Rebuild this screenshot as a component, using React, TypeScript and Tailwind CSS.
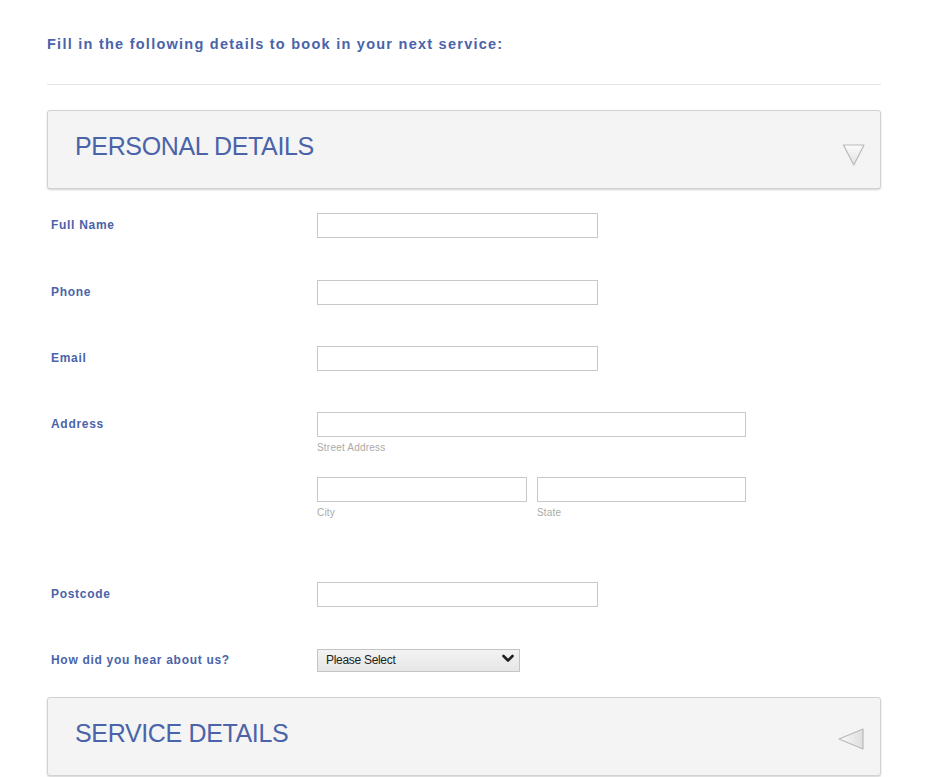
import React from 'react';

function Panel({ title, dir }: { title: string; dir: 'down' | 'left' }) {
  return (
    <div className="h-[79px] border border-[#d2d2d2] rounded-[3px] bg-[#f4f4f4] shadow-[0_1px_2px_rgba(0,0,0,0.18)] flex items-center justify-between pl-[27px] pr-[15px]">
      <h2 className="text-[25px] leading-none text-[#4a63a9] tracking-[-0.35px] -mt-[6px]">{title}</h2>
      {dir === 'down' ? (
        <svg width="24" height="24" viewBox="0 0 24 24" className="mt-[10px]">
          <defs>
            <linearGradient id="tg" x1="0" y1="0" x2="0" y2="1">
              <stop offset="0" stopColor="#fbfbfb" />
              <stop offset="1" stopColor="#e2e2e2" />
            </linearGradient>
          </defs>
          <polygon points="2.5,2 23,2 12.8,22" fill="url(#tg)" stroke="#b9b9b9" strokeWidth="1.2" strokeLinejoin="round" />
        </svg>
      ) : (
        <svg width="28" height="24" viewBox="0 0 28 24" className="mt-[4px]">
          <defs>
            <linearGradient id="tl" x1="0" y1="0" x2="1" y2="0">
              <stop offset="0" stopColor="#fbfbfb" />
              <stop offset="1" stopColor="#dedede" />
            </linearGradient>
          </defs>
          <polygon points="26,2 26,22 2,12" fill="url(#tl)" stroke="#b9b9b9" strokeWidth="1.2" strokeLinejoin="round" />
        </svg>
      )}
    </div>
  );
}

function Input({ w }: { w: string }) {
  return <input type="text" className={`${w} h-[25px] border border-[#c8c8c8] bg-white outline-none`} />;
}

function Row({ label, children, mb }: { label: string; children: React.ReactNode; mb: string }) {
  return (
    <div className={`flex items-start ${mb}`}>
      <label className="w-[266px] ml-[4px] pt-[5px] text-[12px] leading-[14px] font-bold tracking-[0.7px] text-[#4a63a9]">
        {label}
      </label>
      {children}
    </div>
  );
}

export default function App() {
  return (
    <div className="min-h-screen bg-white font-['Liberation_Sans',Arial,sans-serif]">
      <div className="w-[834px] ml-[47px] pt-[36px]">
        <p className="text-[14.5px] leading-[16px] font-bold tracking-[1.25px] text-[#4a63a9]">
          Fill in the following details to book in your next service:
        </p>
        <div className="mt-[32px] h-px bg-[#e3e3e3]" />
        <div className="mt-[25px]">
          <Panel title="PERSONAL DETAILS" dir="down" />
        </div>

        <div className="mt-[24px]">
          <Row label="Full Name" mb="mb-[42px]">
            <Input w="w-[281px]" />
          </Row>
          <Row label="Phone" mb="mb-[41px]">
            <Input w="w-[281px]" />
          </Row>
          <Row label="Email" mb="mb-[41px]">
            <Input w="w-[281px]" />
          </Row>
          <Row label="Address" mb="mb-[64px]">
            <div className="flex flex-col">
              <Input w="w-[429px]" />
              <span className="mt-[5px] text-[10px] leading-[11px] tracking-[0.2px] text-[#aaaaaa]">Street Address</span>
              <div className="mt-[24px] flex gap-[10px]">
                <div className="flex flex-col">
                  <Input w="w-[210px]" />
                  <span className="mt-[5px] text-[10px] leading-[11px] tracking-[0.2px] text-[#aaaaaa]">City</span>
                </div>
                <div className="flex flex-col">
                  <Input w="w-[209px]" />
                  <span className="mt-[5px] text-[10px] leading-[11px] tracking-[0.2px] text-[#aaaaaa]">State</span>
                </div>
              </div>
            </div>
          </Row>
          <Row label="Postcode" mb="mb-[41px]">
            <Input w="w-[281px]" />
          </Row>
          <Row label="How did you hear about us?" mb="mb-[27px]">
            <div className="relative w-[203px] h-[23px] -mt-[1px]">
              <select className="appearance-none w-full h-full border border-[#c4c4c4] bg-gradient-to-b from-[#f3f3f3] to-[#e6e6e6] pl-[8px] text-[12px] text-[#222] tracking-[-0.3px] outline-none">
                <option>Please Select</option>
              </select>
              <svg
                width="12"
                height="9"
                viewBox="0 0 12 9"
                className="absolute right-[6px] top-[7px] pointer-events-none"
              >
                <path d="M1.5 2 L6 6.5 L10.5 2" fill="none" stroke="#222" strokeWidth="2.6" strokeLinecap="round" strokeLinejoin="round" />
              </svg>
            </div>
          </Row>
        </div>

        <Panel title="SERVICE DETAILS" dir="left" />
      </div>
    </div>
  );
}
